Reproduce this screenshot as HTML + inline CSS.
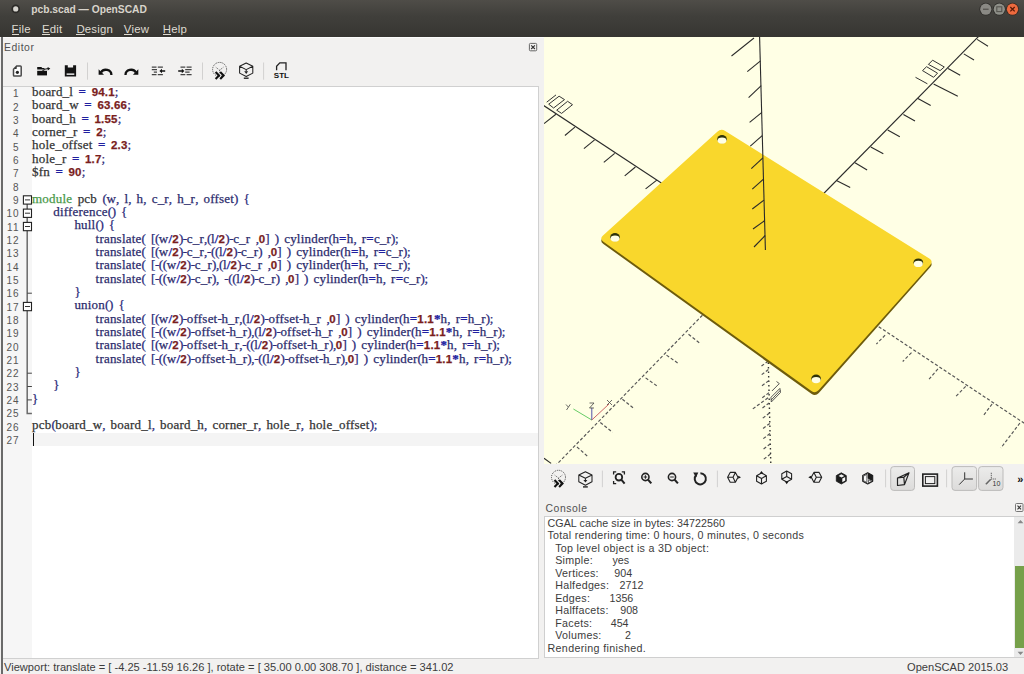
<!DOCTYPE html>
<html><head><meta charset="utf-8"><title>pcb.scad - OpenSCAD</title>
<style>
*{margin:0;padding:0;box-sizing:border-box}
html,body{width:1024px;height:674px;overflow:hidden;background:#f2f1f0;font-family:"Liberation Sans",sans-serif;position:relative}
.a{position:absolute}
#title{left:0;top:0;width:1024px;height:37px;background:linear-gradient(#4f4d48,#403f3b 16px,#3c3b37 26px,#363531)}
.tt{position:absolute;left:31.3px;top:4.1px;font-size:10.25px;font-weight:bold;color:#d8d4cb;white-space:nowrap}
.mi{position:absolute;top:22.8px;font-size:11.4px;letter-spacing:0.2px;color:#dfdbd2;white-space:nowrap}
.mi u{text-decoration:none;position:relative}
.mi u:after{content:"";position:absolute;left:0;right:0;bottom:-0.3px;height:1px;background:#dfdbd2}
.lbl{position:absolute;font-size:10.4px;letter-spacing:0.55px;color:#505050;white-space:nowrap}
#code{left:3px;top:86px;width:536px;height:573px;background:#fff;border-top:1px solid #d0d0d0;border-right:1px solid #d0d0d0;border-bottom:1px solid #d0d0d0}
#gutter{left:3px;top:87px;width:29px;height:571px;background:#f6f6f6}
#curline{left:32px;top:432.5px;width:506px;height:13.3px;background:#f4f4f4}
.ln{position:absolute;left:3px;width:16.5px;margin-top:2.3px;letter-spacing:1px;text-align:right;font-size:10px;color:#555;height:13.33px;line-height:13.33px}
.cl{position:absolute;left:32px;white-space:pre;font-family:"Liberation Serif",serif;font-size:13px;letter-spacing:0.2px;word-spacing:2px;color:#333;height:13.33px;line-height:13.33px;-webkit-text-stroke:0.25px currentColor}
.k{color:#4a9a4a}.n{color:#2b2b6c}.p{color:#2a2a7a;letter-spacing:-0.35px}
.o{color:#2020a0;font-weight:bold}
.d{color:#7a1e1e;font-weight:bold;font-family:"Liberation Sans",sans-serif;font-size:11.5px}
#view{left:544px;top:37px;width:480px;height:427px;background:#ffffe5;overflow:hidden}
#console{left:544px;top:516px;width:471px;height:142px;background:#fff;border:1px solid #cfcfcf}
.cs{position:absolute;font-size:10.7px;line-height:12.5px;color:#3c3c3c;white-space:pre}
.st{position:absolute;top:661px;font-size:11.1px;color:#3c3c3c;white-space:pre}

.ind{word-spacing:1.85px}

</style></head><body>
<div id="title" class="a">
  <div class="tt">pcb.scad — OpenSCAD</div>
  <div class="mi" style="left:11.5px"><u>F</u>ile</div>
  <div class="mi" style="left:42px"><u>E</u>dit</div>
  <div class="mi" style="left:76.4px"><u>D</u>esign</div>
  <div class="mi" style="left:123.8px"><u>V</u>iew</div>
  <div class="mi" style="left:162.7px"><u>H</u>elp</div>
</div>
<div class="a" style="left:0;top:37px;width:1024px;height:1px;background:#fbfbfb"></div>
<div class="a" style="left:1px;top:37px;width:1.5px;height:637px;background:#6a6a6a"></div>
<div class="lbl" style="left:4px;top:42px">Editor</div>
<svg width="1024" height="674" viewBox="0 0 1024 674" style="position:absolute;left:0;top:0;z-index:5;pointer-events:none">
<defs>
<linearGradient id="btn" x1="0" y1="0" x2="0" y2="1"><stop offset="0" stop-color="#ececeb"/><stop offset="1" stop-color="#dcdbda"/></linearGradient>
<g id="hex"><path d="M0 -5.6 L5 -2.9 L5 2.9 L0 5.6 L-5 2.9 L-5 -2.9 Z M-5 -2.9 L0 -0.2 L5 -2.9 M0 -0.2 L0 5.6" fill="none" stroke="#2a2a2a" stroke-width="1.1" stroke-linejoin="round"/></g>
<g id="prev"><circle cx="0" cy="0" r="7" fill="none" stroke="#3a3a3a" stroke-width="1" stroke-dasharray="1 1.1"/><path d="M0 0.8 L-3.8 -2.2 M0 0.8 L3.8 -2.2 M0 0.8 L0 4" stroke="#555" stroke-width="0.9" stroke-dasharray="1 1" fill="none"/><path d="M-4 2.6 L-0.6 6.1 L-4 9.6 M0.6 2.6 L4 6.1 L0.6 9.6" stroke="#111" stroke-width="2.1" fill="none" stroke-linejoin="miter"/></g>
<g id="rend"><path d="M0 -6.6 L6.6 -3.3 L6.6 3.5 L0 6.9 L-6.6 3.5 L-6.6 -3.3 Z M-6.6 -3.3 L0 0 L6.6 -3.3 M0 0 L0 2" fill="none" stroke="#222" stroke-width="1.05" stroke-linejoin="round"/><path d="M-2 1.6 L2 1.6 L0 4.3 Z" fill="#222"/><rect x="-2.4" y="7.9" width="4.8" height="1.4" fill="#222"/></g>
</defs>
<!-- window buttons -->
<circle cx="985.8" cy="9.2" r="6.4" fill="#2e2d2a"/><circle cx="985.8" cy="9.2" r="5.6" fill="#8a8984"/><rect x="983" y="8.6" width="5.6" height="1.3" fill="#55544f"/>
<circle cx="999.3" cy="9.2" r="6.4" fill="#2e2d2a"/><circle cx="999.3" cy="9.2" r="5.6" fill="#8e8f88"/><rect x="996.8" y="6.8" width="5" height="4.8" fill="none" stroke="#55544f" stroke-width="1.1"/>
<circle cx="1012.5" cy="9.2" r="6.4" fill="#3a2a22"/><circle cx="1012.5" cy="9.2" r="5.6" fill="#ee6a3e"/><path d="M1010.3 7 L1014.7 11.4 M1014.7 7 L1010.3 11.4" stroke="#5a1a08" stroke-width="1.3"/>
<!-- app icon -->
<circle cx="15.7" cy="8.9" r="4.3" fill="#2c2b28"/><circle cx="15.7" cy="8.9" r="2.6" fill="#d8d6d0"/>
<!-- editor dock close -->
<rect x="529.4" y="43.4" width="7.3" height="7.4" rx="1" fill="none" stroke="#666" stroke-width="1"/><path d="M531.2 45.3 L534.9 49 M534.9 45.3 L531.2 49" stroke="#333" stroke-width="1.1"/>
<path d="M1017.6 523.2 L1020.5 520 L1023.4 523.2 Z M1017.6 651.8 L1020.5 655 L1023.4 651.8 Z" fill="#888"/>
<!-- console dock close -->
<rect x="1015.5" y="503.5" width="7.5" height="8" rx="1" fill="none" stroke="#777" stroke-width="1"/><path d="M1017.5 505.7 L1021 509.3 M1021 505.7 L1017.5 509.3" stroke="#333" stroke-width="1.1"/>
<!-- fold markers -->
<path d="M27.2 204 V413.6 H31.9" fill="none" stroke="#6a6a6a" stroke-width="1.5"/>
<path d="M27.2 293.2 H31.9" stroke="#444" stroke-width="1"/>
<path d="M27.2 373.2 H31.9" stroke="#444" stroke-width="1"/>
<path d="M27.2 386.5 H31.9" stroke="#444" stroke-width="1"/>
<path d="M27.2 399.9 H31.9" stroke="#444" stroke-width="1"/>
<rect x="23.4" y="195.8" width="8.1" height="8.3" fill="#fff" stroke="#222" stroke-width="1.1"/><path d="M25 199.9 H30" stroke="#333" stroke-width="1"/>
<rect x="23.4" y="209.1" width="8.1" height="8.3" fill="#fff" stroke="#222" stroke-width="1.1"/><path d="M25 213.2 H30" stroke="#333" stroke-width="1"/>
<rect x="23.4" y="222.4" width="8.1" height="8.3" fill="#fff" stroke="#222" stroke-width="1.1"/><path d="M25 226.5 H30" stroke="#333" stroke-width="1"/>
<rect x="23.4" y="302.4" width="8.1" height="8.3" fill="#fff" stroke="#222" stroke-width="1.1"/><path d="M25 306.5 H30" stroke="#333" stroke-width="1"/>
<!-- editor toolbar -->
<path d="M13.5 69.3 L16.9 65.9 H20.3 Q21.2 65.9 21.2 66.8 V75.2 Q21.2 76.1 20.3 76.1 H14.4 Q13.5 76.1 13.5 75.2 Z" fill="#fdfdfd" stroke="#4a4a4a" stroke-width="1.5" stroke-linejoin="round"/>
<path d="M14.2 68.9 L16.6 66.5 L16.6 68.9 Z" fill="#333"/>
<circle cx="17.4" cy="72.3" r="1.6" fill="#222"/>
<path d="M37.2 67 H41.3 L42.3 68 H44.5 V69.6 H37.2 Z" fill="#111"/>
<rect x="37.2" y="70.8" width="9.8" height="4.6" fill="#111"/>
<path d="M42.5 71 Q45 68.2 48.3 68.6" stroke="#333" stroke-width="1.2" fill="none"/><path d="M47.6 66.9 L50.3 68.6 L47.8 70.4 Z" fill="#111"/>
<path d="M64.8 65.3 H67.8 V67.6 H73.1 V65.3 H76.1 V76.4 H64.8 Z" fill="#141414"/>
<rect x="66.6" y="73.4" width="7.7" height="1.5" fill="#e8e8e8"/>
<line x1="87.5" y1="62.5" x2="87.5" y2="79.7" stroke="#d2d1d0" stroke-width="1"/>
<path d="M101 72.3 A5.6 5.2 0 0 1 111.4 74.9" fill="none" stroke="#111" stroke-width="2.3"/>
<path d="M98.6 69.3 L98.6 74.7 L104 74.7 Z" fill="#111"/>
<path d="M135.9 72.3 A5.6 5.2 0 0 0 125.5 74.9" fill="none" stroke="#111" stroke-width="2.3"/>
<path d="M138.3 69.3 L138.3 74.7 L132.9 74.7 Z" fill="#111"/>
<g stroke="#444" stroke-width="1.2">
<path d="M151.8 67.1 H156.5 M157.8 67.1 H162.9 M151.8 69.6 H157 M153.8 72.1 H157 M151.8 74.6 H156.5 M157.8 74.6 H162.9"/>
<path d="M180.5 67.1 H185.3 M186.6 67.1 H191.6 M185.2 69.6 H191.6 M185.2 72.1 H189.6 M180.5 74.6 H185.3 M186.6 74.6 H191.6"/>
</g>
<path d="M159.4 71 L162 68.8 V70.3 H165.2 V71.7 H162 V73.2 Z" fill="#111"/>
<path d="M184.4 71 L181.8 68.8 V70.3 H178.2 V71.7 H181.8 V73.2 Z" fill="#111"/>
<line x1="202.5" y1="62.5" x2="202.5" y2="79.7" stroke="#d2d1d0" stroke-width="1"/>
<use href="#prev" x="219.6" y="69.4"/>
<use href="#rend" x="246.2" y="69.6"/>
<line x1="263.6" y1="62.5" x2="263.6" y2="79.7" stroke="#d2d1d0" stroke-width="1"/>
<path d="M276.6 70.3 V66.2 L279.8 62.9 H286 V70.3" fill="none" stroke="#222" stroke-width="1.3" stroke-linejoin="miter"/>
<text x="273.8" y="77.9" font-family="Liberation Sans" font-weight="bold" font-size="7" fill="#111" textLength="15.2" lengthAdjust="spacingAndGlyphs">STL</text>
<!-- view toolbar -->
<use href="#prev" x="558.5" y="477.3"/>
<use href="#rend" x="585.4" y="478.3"/>
<line x1="602.4" y1="470.6" x2="602.4" y2="487.2" stroke="#d2d1d0" stroke-width="1"/>
<g fill="none" stroke="#222" stroke-width="1.3">
<path d="M613.6 474.5 V471.9 H616.2 M621.8 471.9 H624.4 V474.5 M613.6 481 V483.6 H616.2"/>
<circle cx="618.9" cy="477.2" r="3.3" stroke-width="1.8"/>
<path d="M621.3 479.6 L624.6 483.6" stroke-width="2"/>
<circle cx="645.4" cy="477" r="3.6" stroke-width="1.6"/><path d="M648 479.6 L651.3 483.4" stroke-width="2.1"/><path d="M643.6 477 H647.2 M645.4 475.2 V478.8" stroke-width="1"/>
<circle cx="672" cy="477" r="3.6" stroke-width="1.6"/><path d="M674.6 479.6 L677.9 483.4" stroke-width="2.1"/><path d="M670.2 477 H673.8" stroke-width="1"/>
<path d="M696.2 475 A5.6 5.6 0 1 0 700.4 473.2" stroke-width="2"/>
</g>
<path d="M693.2 472.6 L698.3 472.6 L696 477.5 Z" fill="#222"/>
<line x1="717.4" y1="470.6" x2="717.4" y2="487.2" stroke="#d2d1d0" stroke-width="1"/>
<g fill="none" stroke="#222" stroke-width="1.1" stroke-linejoin="round">
<path d="M727.6 477.3 L730.2 472.4 L735.4 472.4 L738 477.3 L735.4 482.2 L730.2 482.2 Z M727.6 477.3 H733 L735.4 472.4 M733 477.3 L735.4 482.2"/>
<path d="M761.5 472.9 L766.4 475.7 L766.4 481.2 L761.5 484 L756.6 481.2 L756.6 475.7 Z M756.6 475.7 L761.5 478.5 L766.4 475.7 M761.5 478.5 V484"/>
<path d="M786.7 471 L791.6 473.8 L791.6 479.3 L786.7 482.1 L781.8 479.3 L781.8 473.8 Z M786.7 471 V476.5 L781.8 479.3 M786.7 476.5 L791.6 479.3"/>
<path d="M811.3 477.3 L813.9 472.4 L819.1 472.4 L821.7 477.3 L819.1 482.2 L813.9 482.2 Z M821.7 477.3 H816.3 L813.9 472.4 M816.3 477.3 L813.9 482.2"/>
</g>
<path d="M738.2 475.8 L741 477.3 L738.2 478.8 Z" fill="#111"/>
<path d="M759.7 473.6 L761.5 470.9 L763.3 473.6 Z" fill="#111"/>
<path d="M784.9 481.6 L786.7 484.3 L788.5 481.6 Z" fill="#111"/>
<path d="M811.1 475.8 L808.3 477.3 L811.1 478.8 Z" fill="#111"/>
<path d="M841.3 472.8 L846.3 475.6 L846.3 481.2 L841.3 484 L836.3 481.2 L836.3 475.6 Z" fill="#1c1c1c" stroke="#1c1c1c" stroke-width="0.8" stroke-linejoin="round"/>
<path d="M841.3 474.3 L844.3 475.9 L841.6 477.5 L838.6 475.9 Z" fill="#f2f2f2"/>
<path d="M842.3 478.6 L845.2 477 L845.2 480.6 L842.3 482.3 Z" fill="#f8f8f8"/>
<path d="M867.7 472.8 L872.7 475.6 L872.7 481.2 L867.7 484 L862.7 481.2 L862.7 475.6 Z" fill="#fafafa" stroke="#1c1c1c" stroke-width="1.1" stroke-linejoin="round"/>
<path d="M867.7 472.8 L872.7 475.6 L872.7 481.2 L867.7 478.4 Z" fill="#1c1c1c"/>
<path d="M863.5 476.2 L866.9 474.3 L866.9 478.6 M863.5 476.2 V480.6 L866.9 482.6 V478.6 M868.6 479.6 L871.8 481.4 L868.6 483.2 Z" fill="none" stroke="#333" stroke-width="0.8"/>
<line x1="885.6" y1="469.5" x2="885.6" y2="487.3" stroke="#d2d1d0" stroke-width="1"/>
<rect x="890.7" y="466.6" width="23.8" height="23.8" rx="3" fill="url(#btn)" stroke="#bcbbba" stroke-width="1"/>
<g fill="none" stroke="#222" stroke-width="1.2" stroke-linejoin="round">
<path d="M897.5 478 L909 472.8 L904.5 484.6 L897.5 485.5 Z M897.5 478 L903.8 477.2 L904.5 484.6 M903.8 477.2 L909 472.8"/>
</g>
<g fill="none" stroke="#222">
<rect x="922.8" y="474.1" width="14.6" height="12" stroke-width="1.6"/><rect x="925.4" y="476.6" width="9.4" height="7" stroke-width="1"/>
</g>
<line x1="946.6" y1="469.5" x2="946.6" y2="487.3" stroke="#d2d1d0" stroke-width="1"/>
<rect x="952" y="466.6" width="24.6" height="23.8" rx="3" fill="url(#btn)" stroke="#bcbbba" stroke-width="1"/>
<rect x="978.6" y="466.6" width="24.4" height="23.8" rx="3" fill="url(#btn)" stroke="#bcbbba" stroke-width="1"/>
<path d="M964.7 472.3 V479 H972.9 M964.7 479 L959.2 484.6" fill="none" stroke="#333" stroke-width="1"/>
<path d="M991.3 472.8 V479 M991.3 479 H996 M991.3 479 L986 484.4" fill="none" stroke="#444" stroke-width="1" stroke-dasharray="1 1"/>
<path d="M990.5 479.5 L985.8 484.3" stroke="#666" stroke-width="1.4"/>
<text x="992.5" y="485.6" font-family="Liberation Sans" font-size="7" fill="#333">10</text>
<text x="1017.3" y="482.8" font-family="Liberation Sans" font-weight="bold" font-size="11" fill="#111">»</text>
</svg>

<div id="code" class="a"></div>
<div id="gutter" class="a"></div>
<div id="curline" class="a"></div>
<div class="ln" style="top:85.00px">1</div>
<div class="cl" style="top:85.00px">board_l <span class="o">=</span> <span class="d">94.1</span><span class="p">;</span></div>
<div class="ln" style="top:98.33px">2</div>
<div class="cl" style="top:98.33px">board_w <span class="o">=</span> <span class="d">63.66</span><span class="p">;</span></div>
<div class="ln" style="top:111.67px">3</div>
<div class="cl" style="top:111.67px">board_h <span class="o">=</span> <span class="d">1.55</span><span class="p">;</span></div>
<div class="ln" style="top:125.00px">4</div>
<div class="cl" style="top:125.00px">corner_r <span class="o">=</span> <span class="d">2</span><span class="p">;</span></div>
<div class="ln" style="top:138.33px">5</div>
<div class="cl" style="top:138.33px">hole_offset <span class="o">=</span> <span class="d">2.3</span><span class="p">;</span></div>
<div class="ln" style="top:151.67px">6</div>
<div class="cl" style="top:151.67px">hole_r <span class="o">=</span> <span class="d">1.7</span><span class="p">;</span></div>
<div class="ln" style="top:165.00px">7</div>
<div class="cl" style="top:165.00px">$fn <span class="o">=</span> <span class="d">90</span><span class="p">;</span></div>
<div class="ln" style="top:178.33px">8</div>
<div class="cl" style="top:178.33px"></div>
<div class="ln" style="top:191.66px">9</div>
<div class="cl" style="top:191.66px"><span class="k">module</span> pcb <span class="p">(</span><span class="n">w</span><span class="p">,</span> <span class="n">l</span><span class="p">,</span> <span class="n">h</span><span class="p">,</span> <span class="n">c_r</span><span class="p">,</span> <span class="n">h_r</span><span class="p">,</span> <span class="n">offset</span><span class="p">)</span> <span class="p">{</span></div>
<div class="ln" style="top:205.00px">10</div>
<div class="cl" style="top:205.00px"><span class="ind">    </span><span class="n">difference</span><span class="p">(</span><span class="p">)</span> <span class="p">{</span></div>
<div class="ln" style="top:218.33px">11</div>
<div class="cl" style="top:218.33px"><span class="ind">        </span><span class="n">hull</span><span class="p">(</span><span class="p">)</span> <span class="p">{</span></div>
<div class="ln" style="top:231.66px">12</div>
<div class="cl" style="top:231.66px"><span class="ind">            </span><span class="n">translate</span><span class="p">(</span> <span class="p">[</span><span class="p">(</span><span class="n">w</span><span class="o">/</span><span class="d">2</span><span class="p">)</span><span class="p">-</span><span class="n">c_r</span><span class="p">,</span><span class="p">(</span><span class="n">l</span><span class="o">/</span><span class="d">2</span><span class="p">)</span><span class="p">-</span><span class="n">c_r</span> <span class="p">,</span><span class="d">0</span><span class="p">]</span> <span class="p">)</span> <span class="n">cylinder</span><span class="p">(</span><span class="n">h</span><span class="o">=</span><span class="n">h</span><span class="p">,</span> <span class="n">r</span><span class="o">=</span><span class="n">c_r</span><span class="p">)</span><span class="p">;</span></div>
<div class="ln" style="top:245.00px">13</div>
<div class="cl" style="top:245.00px"><span class="ind">            </span><span class="n">translate</span><span class="p">(</span> <span class="p">[</span><span class="p">(</span><span class="n">w</span><span class="o">/</span><span class="d">2</span><span class="p">)</span><span class="p">-</span><span class="n">c_r</span><span class="p">,</span><span class="p">-</span><span class="p">(</span><span class="p">(</span><span class="n">l</span><span class="o">/</span><span class="d">2</span><span class="p">)</span><span class="p">-</span><span class="n">c_r</span><span class="p">)</span> <span class="p">,</span><span class="d">0</span><span class="p">]</span> <span class="p">)</span> <span class="n">cylinder</span><span class="p">(</span><span class="n">h</span><span class="o">=</span><span class="n">h</span><span class="p">,</span> <span class="n">r</span><span class="o">=</span><span class="n">c_r</span><span class="p">)</span><span class="p">;</span></div>
<div class="ln" style="top:258.33px">14</div>
<div class="cl" style="top:258.33px"><span class="ind">            </span><span class="n">translate</span><span class="p">(</span> <span class="p">[</span><span class="p">-</span><span class="p">(</span><span class="p">(</span><span class="n">w</span><span class="o">/</span><span class="d">2</span><span class="p">)</span><span class="p">-</span><span class="n">c_r</span><span class="p">)</span><span class="p">,</span><span class="p">(</span><span class="n">l</span><span class="o">/</span><span class="d">2</span><span class="p">)</span><span class="p">-</span><span class="n">c_r</span> <span class="p">,</span><span class="d">0</span><span class="p">]</span> <span class="p">)</span> <span class="n">cylinder</span><span class="p">(</span><span class="n">h</span><span class="o">=</span><span class="n">h</span><span class="p">,</span> <span class="n">r</span><span class="o">=</span><span class="n">c_r</span><span class="p">)</span><span class="p">;</span></div>
<div class="ln" style="top:271.66px">15</div>
<div class="cl" style="top:271.66px"><span class="ind">            </span><span class="n">translate</span><span class="p">(</span> <span class="p">[</span><span class="p">-</span><span class="p">(</span><span class="p">(</span><span class="n">w</span><span class="o">/</span><span class="d">2</span><span class="p">)</span><span class="p">-</span><span class="n">c_r</span><span class="p">)</span><span class="p">,</span> <span class="p">-</span><span class="p">(</span><span class="p">(</span><span class="n">l</span><span class="o">/</span><span class="d">2</span><span class="p">)</span><span class="p">-</span><span class="n">c_r</span><span class="p">)</span> <span class="p">,</span><span class="d">0</span><span class="p">]</span> <span class="p">)</span> <span class="n">cylinder</span><span class="p">(</span><span class="n">h</span><span class="o">=</span><span class="n">h</span><span class="p">,</span> <span class="n">r</span><span class="o">=</span><span class="n">c_r</span><span class="p">)</span><span class="p">;</span></div>
<div class="ln" style="top:285.00px">16</div>
<div class="cl" style="top:285.00px"><span class="ind">        </span><span class="p">}</span></div>
<div class="ln" style="top:298.33px">17</div>
<div class="cl" style="top:298.33px"><span class="ind">        </span><span class="n">union</span><span class="p">(</span><span class="p">)</span> <span class="p">{</span></div>
<div class="ln" style="top:311.66px">18</div>
<div class="cl" style="top:311.66px"><span class="ind">            </span><span class="n">translate</span><span class="p">(</span> <span class="p">[</span><span class="p">(</span><span class="n">w</span><span class="o">/</span><span class="d">2</span><span class="p">)</span><span class="p">-</span><span class="n">offset</span><span class="p">-</span><span class="n">h_r</span><span class="p">,</span><span class="p">(</span><span class="n">l</span><span class="o">/</span><span class="d">2</span><span class="p">)</span><span class="p">-</span><span class="n">offset</span><span class="p">-</span><span class="n">h_r</span> <span class="p">,</span><span class="d">0</span><span class="p">]</span> <span class="p">)</span> <span class="n">cylinder</span><span class="p">(</span><span class="n">h</span><span class="o">=</span><span class="d">1.1</span><span class="o">*</span><span class="n">h</span><span class="p">,</span> <span class="n">r</span><span class="o">=</span><span class="n">h_r</span><span class="p">)</span><span class="p">;</span></div>
<div class="ln" style="top:324.99px">19</div>
<div class="cl" style="top:324.99px"><span class="ind">            </span><span class="n">translate</span><span class="p">(</span> <span class="p">[</span><span class="p">-</span><span class="p">(</span><span class="p">(</span><span class="n">w</span><span class="o">/</span><span class="d">2</span><span class="p">)</span><span class="p">-</span><span class="n">offset</span><span class="p">-</span><span class="n">h_r</span><span class="p">)</span><span class="p">,</span><span class="p">(</span><span class="n">l</span><span class="o">/</span><span class="d">2</span><span class="p">)</span><span class="p">-</span><span class="n">offset</span><span class="p">-</span><span class="n">h_r</span> <span class="p">,</span><span class="d">0</span><span class="p">]</span> <span class="p">)</span> <span class="n">cylinder</span><span class="p">(</span><span class="n">h</span><span class="o">=</span><span class="d">1.1</span><span class="o">*</span><span class="n">h</span><span class="p">,</span> <span class="n">r</span><span class="o">=</span><span class="n">h_r</span><span class="p">)</span><span class="p">;</span></div>
<div class="ln" style="top:338.33px">20</div>
<div class="cl" style="top:338.33px"><span class="ind">            </span><span class="n">translate</span><span class="p">(</span> <span class="p">[</span><span class="p">(</span><span class="n">w</span><span class="o">/</span><span class="d">2</span><span class="p">)</span><span class="p">-</span><span class="n">offset</span><span class="p">-</span><span class="n">h_r</span><span class="p">,</span><span class="p">-</span><span class="p">(</span><span class="p">(</span><span class="n">l</span><span class="o">/</span><span class="d">2</span><span class="p">)</span><span class="p">-</span><span class="n">offset</span><span class="p">-</span><span class="n">h_r</span><span class="p">)</span><span class="p">,</span><span class="d">0</span><span class="p">]</span> <span class="p">)</span> <span class="n">cylinder</span><span class="p">(</span><span class="n">h</span><span class="o">=</span><span class="d">1.1</span><span class="o">*</span><span class="n">h</span><span class="p">,</span> <span class="n">r</span><span class="o">=</span><span class="n">h_r</span><span class="p">)</span><span class="p">;</span></div>
<div class="ln" style="top:351.66px">21</div>
<div class="cl" style="top:351.66px"><span class="ind">            </span><span class="n">translate</span><span class="p">(</span> <span class="p">[</span><span class="p">-</span><span class="p">(</span><span class="p">(</span><span class="n">w</span><span class="o">/</span><span class="d">2</span><span class="p">)</span><span class="p">-</span><span class="n">offset</span><span class="p">-</span><span class="n">h_r</span><span class="p">)</span><span class="p">,</span><span class="p">-</span><span class="p">(</span><span class="p">(</span><span class="n">l</span><span class="o">/</span><span class="d">2</span><span class="p">)</span><span class="p">-</span><span class="n">offset</span><span class="p">-</span><span class="n">h_r</span><span class="p">)</span><span class="p">,</span><span class="d">0</span><span class="p">]</span> <span class="p">)</span> <span class="n">cylinder</span><span class="p">(</span><span class="n">h</span><span class="o">=</span><span class="d">1.1</span><span class="o">*</span><span class="n">h</span><span class="p">,</span> <span class="n">r</span><span class="o">=</span><span class="n">h_r</span><span class="p">)</span><span class="p">;</span></div>
<div class="ln" style="top:364.99px">22</div>
<div class="cl" style="top:364.99px"><span class="ind">        </span><span class="p">}</span></div>
<div class="ln" style="top:378.33px">23</div>
<div class="cl" style="top:378.33px"><span class="ind">    </span><span class="p">}</span></div>
<div class="ln" style="top:391.66px">24</div>
<div class="cl" style="top:391.66px"><span class="p">}</span></div>
<div class="ln" style="top:404.99px">25</div>
<div class="cl" style="top:404.99px"></div>
<div class="ln" style="top:418.32px">26</div>
<div class="cl" style="top:418.32px">pcb<span class="p">(</span>board_w<span class="p">,</span> board_l<span class="p">,</span> board_h<span class="p">,</span> corner_r<span class="p">,</span> hole_r<span class="p">,</span> hole_offset<span class="p">)</span><span class="p">;</span></div>
<div class="ln" style="top:431.66px">27</div>
<div class="cl" style="top:431.66px"></div>
<div class="a" style="left:32.6px;top:432.6px;width:1.6px;height:13px;background:#111"></div>
<div id="view" class="a"><svg width="480" height="427" viewBox="544 37 480 427" style="position:absolute;left:0;top:0"><line x1="766.0" y1="252.0" x2="530.0" y2="96.5" stroke="#2a2a2a" stroke-width="1.1"/><line x1="555.9" y1="114.2" x2="544.0" y2="123.6" stroke="#2a2a2a" stroke-width="1.1"/><line x1="574.9" y1="127.2" x2="564.9" y2="135.5" stroke="#2a2a2a" stroke-width="1.1"/><line x1="594.6" y1="139.8" x2="583.9" y2="148.6" stroke="#2a2a2a" stroke-width="1.1"/><line x1="614.7" y1="153.3" x2="603.8" y2="162.3" stroke="#2a2a2a" stroke-width="1.1"/><line x1="635.4" y1="167.0" x2="624.7" y2="175.9" stroke="#2a2a2a" stroke-width="1.1"/><line x1="656.8" y1="180.1" x2="645.6" y2="188.9" stroke="#2a2a2a" stroke-width="1.1"/><path d="M546.7 102.2 L556 94.9 M548.7 104.2 L559.1 96.2 L564.5 99.6 L553.6 108 Z M556.7 110.2 L567.6 101.3 L572.5 104.7 L561.6 113.4 Z" fill="none" stroke="#333" stroke-width="1" stroke-linejoin="round"/><line x1="766.0" y1="252.0" x2="980.0" y2="35.0" stroke="#2a2a2a" stroke-width="1.1"/><line x1="836.9" y1="180.8" x2="850.2" y2="187.4" stroke="#2a2a2a" stroke-width="1.1"/><line x1="855.0" y1="162.7" x2="867.1" y2="170.0" stroke="#2a2a2a" stroke-width="1.1"/><line x1="870.8" y1="147.0" x2="883.3" y2="153.8" stroke="#2a2a2a" stroke-width="1.1"/><line x1="887.7" y1="130.0" x2="899.8" y2="136.8" stroke="#2a2a2a" stroke-width="1.1"/><line x1="903.4" y1="114.4" x2="915.0" y2="121.1" stroke="#2a2a2a" stroke-width="1.1"/><line x1="917.9" y1="98.6" x2="930.7" y2="105.4" stroke="#2a2a2a" stroke-width="1.1"/><line x1="933.6" y1="84.1" x2="957.8" y2="96.2" stroke="#2a2a2a" stroke-width="1.1"/><line x1="948.1" y1="68.4" x2="960.2" y2="75.2" stroke="#2a2a2a" stroke-width="1.1"/><line x1="963.8" y1="53.9" x2="974.0" y2="60.0" stroke="#2a2a2a" stroke-width="1.1"/><line x1="977.1" y1="39.4" x2="988.0" y2="46.2" stroke="#2a2a2a" stroke-width="1.1"/><path d="M915.5 77.3 L927.4 83.8 M922.5 70.6 L926.6 66.7 L937.5 73.2 L933.6 77.3 Z M928.4 64.4 L932.6 60.2 L944.3 67 L940.1 70.6 Z" fill="none" stroke="#333" stroke-width="1" stroke-linejoin="round"/><line x1="764.2" y1="252.0" x2="543.4" y2="478.0" stroke="#555" stroke-width="1.15" stroke-dasharray="3.2 2"/><line x1="688.5" y1="334.3" x2="699.5" y2="342.9" stroke="#555" stroke-width="1.15" stroke-dasharray="3.2 2"/><line x1="666.5" y1="355.1" x2="678.7" y2="363.7" stroke="#555" stroke-width="1.15" stroke-dasharray="3.2 2"/><line x1="645.6" y1="377.9" x2="656.7" y2="385.7" stroke="#555" stroke-width="1.15" stroke-dasharray="3.2 2"/><line x1="622.4" y1="399.2" x2="634.6" y2="409.0" stroke="#555" stroke-width="1.15" stroke-dasharray="3.2 2"/><line x1="600.3" y1="422.5" x2="612.6" y2="432.3" stroke="#555" stroke-width="1.15" stroke-dasharray="3.2 2"/><line x1="577.0" y1="447.0" x2="588.0" y2="456.7" stroke="#555" stroke-width="1.15" stroke-dasharray="3.2 2"/><line x1="544.0" y1="458.2" x2="551.1" y2="463.4" stroke="#2a2a2a" stroke-width="1.1"/><line x1="766.0" y1="252.0" x2="1030.0" y2="427.0" stroke="#555" stroke-width="1.15" stroke-dasharray="3.2 2"/><line x1="885.1" y1="335.2" x2="876.4" y2="344.0" stroke="#555" stroke-width="1.15" stroke-dasharray="3.2 2"/><line x1="911.5" y1="352.7" x2="902.7" y2="361.5" stroke="#555" stroke-width="1.15" stroke-dasharray="3.2 2"/><line x1="937.9" y1="368.9" x2="929.1" y2="379.1" stroke="#555" stroke-width="1.15" stroke-dasharray="3.2 2"/><line x1="965.7" y1="386.4" x2="955.5" y2="396.7" stroke="#555" stroke-width="1.15" stroke-dasharray="3.2 2"/><line x1="992.1" y1="404.0" x2="983.3" y2="415.7" stroke="#555" stroke-width="1.15" stroke-dasharray="3.2 2"/><line x1="1019.9" y1="423.0" x2="1000.9" y2="448.0" stroke="#555" stroke-width="1.15" stroke-dasharray="3.2 2"/><line x1="768.2" y1="358" x2="770.8" y2="464" stroke="#333" stroke-width="1.4" stroke-dasharray="1.5 3"/><line x1="768.2" y1="361.0" x2="760.2" y2="367.0" stroke="#555" stroke-width="1.2" stroke-dasharray="3.2 2"/><line x1="768.4" y1="369.6" x2="760.4" y2="375.6" stroke="#555" stroke-width="1.2" stroke-dasharray="3.2 2"/><line x1="768.7" y1="380.7" x2="760.7" y2="386.7" stroke="#555" stroke-width="1.2" stroke-dasharray="3.2 2"/><line x1="769.0" y1="392.7" x2="761.0" y2="398.7" stroke="#555" stroke-width="1.2" stroke-dasharray="3.2 2"/><line x1="769.2" y1="402.9" x2="761.2" y2="408.9" stroke="#555" stroke-width="1.2" stroke-dasharray="3.2 2"/><line x1="769.5" y1="413.1" x2="761.5" y2="419.1" stroke="#555" stroke-width="1.2" stroke-dasharray="3.2 2"/><line x1="769.8" y1="423.4" x2="761.8" y2="429.4" stroke="#555" stroke-width="1.2" stroke-dasharray="3.2 2"/><line x1="770.0" y1="433.6" x2="762.0" y2="439.6" stroke="#555" stroke-width="1.2" stroke-dasharray="3.2 2"/><line x1="770.3" y1="443.9" x2="762.3" y2="449.9" stroke="#555" stroke-width="1.2" stroke-dasharray="3.2 2"/><line x1="770.5" y1="454.1" x2="762.5" y2="460.1" stroke="#555" stroke-width="1.2" stroke-dasharray="3.2 2"/><line x1="768.0" y1="397.8" x2="752.8" y2="408.9" stroke="#555" stroke-width="1.2" stroke-dasharray="3.2 2"/><path d="M771.9 391 L779.3 383.6 L776.5 381.5 M771 397.3 L779.9 388.4 L780.5 392.5 L771.3 402 Z M771.2 400 L780.2 390.5" fill="none" stroke="#444" stroke-width="0.9" stroke-linejoin="round"/><path d="M717.3 134.0 Q721.0 130.6 725.2 133.3 L929.3 260.8 Q933.5 263.5 930.2 267.2 L818.8 392.9 Q815.5 396.6 811.4 393.7 L603.4 244.0 Q599.3 241.1 603.0 237.7 Z" fill="#6e5c0c"/><path d="M717.3 131.7 Q721.0 128.3 725.2 131.0 L929.3 258.5 Q933.5 261.2 930.2 264.9 L818.8 390.1 Q815.5 393.8 811.4 390.9 L603.4 241.7 Q599.3 238.8 603.0 235.4 Z" fill="#f9d72c"/><ellipse cx="722" cy="139.2" rx="4.8" ry="4.1" fill="#2e3208"/><ellipse cx="722" cy="140.6" rx="4.5" ry="3.1" fill="#ffffe5"/><ellipse cx="615" cy="237.2" rx="4.8" ry="4.1" fill="#2e3208"/><ellipse cx="615" cy="238.6" rx="4.5" ry="3.1" fill="#ffffe5"/><ellipse cx="918.3" cy="262.5" rx="4.8" ry="4.1" fill="#2e3208"/><ellipse cx="918.3" cy="263.90000000000003" rx="4.5" ry="3.1" fill="#ffffe5"/><ellipse cx="816.1" cy="378.7" rx="4.8" ry="4.1" fill="#2e3208"/><ellipse cx="816.1" cy="380.1" rx="4.5" ry="3.1" fill="#ffffe5"/><line x1="759.6" y1="37.0" x2="765.4" y2="250.0" stroke="#2a2a2a" stroke-width="1.1"/><line x1="754.0" y1="38.0" x2="731.5" y2="56.0" stroke="#2a2a2a" stroke-width="1.1"/><line x1="760.5" y1="60.8" x2="747.3" y2="71.7" stroke="#2a2a2a" stroke-width="1.1"/><line x1="761.2" y1="85.6" x2="748.6" y2="97.6" stroke="#2a2a2a" stroke-width="1.1"/><line x1="761.9" y1="112.4" x2="749.6" y2="122.4" stroke="#2a2a2a" stroke-width="1.1"/><line x1="762.2" y1="135.6" x2="750.3" y2="146.2" stroke="#2a2a2a" stroke-width="1.1"/><line x1="762.9" y1="157.8" x2="751.3" y2="168.7" stroke="#2a2a2a" stroke-width="1.1"/><line x1="763.2" y1="179.3" x2="752.3" y2="189.2" stroke="#2a2a2a" stroke-width="1.1"/><line x1="763.9" y1="200.1" x2="752.3" y2="209.0" stroke="#2a2a2a" stroke-width="1.1"/><line x1="764.5" y1="220.7" x2="753.0" y2="229.0" stroke="#2a2a2a" stroke-width="1.1"/><line x1="765.2" y1="235.5" x2="754.0" y2="247.0" stroke="#2a2a2a" stroke-width="1.1"/><line x1="591.8" y1="420" x2="573.4" y2="409" stroke="#6c6" stroke-width="1"/><line x1="591.8" y1="420" x2="591.8" y2="407.8" stroke="#55a" stroke-width="1"/><line x1="591.8" y1="420" x2="609" y2="404" stroke="#c66" stroke-width="1"/><path d="M566 404.5 L568.3 407 M570.3 404.3 L566.5 410 M589.5 403 L594 403 L589.5 408 L594 408 M607 400 L612 405 M612 400 L607 405" fill="none" stroke="#444" stroke-width="0.8"/></svg></div>
<div class="lbl" style="left:545.5px;top:503px">Console</div>
<div id="console" class="a"></div>
<div class="a" style="left:1014px;top:516px;width:10px;height:142px;background:#ebebeb;border-top:1px solid #cfcfcf;border-bottom:1px solid #cfcfcf"></div>
<div class="a" style="left:1015px;top:566px;width:9px;height:82px;background:#76a04a"></div>
<div class="cs" style="left:547.5px;top:516.8px;letter-spacing:0.06px">CGAL cache size in bytes: 34722560</div>
<div class="cs" style="left:547.5px;top:529.3px;letter-spacing:0.28px">Total rendering time: 0 hours, 0 minutes, 0 seconds</div>
<div class="cs" style="left:555.2px;top:541.8px;letter-spacing:0.3px">Top level object is a 3D object:</div>
<div class="cs" style="left:555.2px;top:554.3px;letter-spacing:0.3px">Simple:</div>
<div class="cs" style="left:612.5px;top:554.3px">yes</div>
<div class="cs" style="left:555.2px;top:566.8px;letter-spacing:0.3px">Vertices:</div>
<div class="cs" style="left:614.3px;top:566.8px">904</div>
<div class="cs" style="left:555.2px;top:579.3px;letter-spacing:0.3px">Halfedges:</div>
<div class="cs" style="left:619.6px;top:579.3px">2712</div>
<div class="cs" style="left:555.2px;top:591.8px;letter-spacing:0.3px">Edges:</div>
<div class="cs" style="left:609.5px;top:591.8px">1356</div>
<div class="cs" style="left:555.2px;top:604.3px;letter-spacing:0.3px">Halffacets:</div>
<div class="cs" style="left:620.2px;top:604.3px">908</div>
<div class="cs" style="left:555.2px;top:616.8px;letter-spacing:0.3px">Facets:</div>
<div class="cs" style="left:610.7px;top:616.8px">454</div>
<div class="cs" style="left:555.2px;top:629.3px;letter-spacing:0.3px">Volumes:</div>
<div class="cs" style="left:625px;top:629.3px">2</div>
<div class="cs" style="left:547.5px;top:641.8px;letter-spacing:0.34px">Rendering finished.</div>
<div class="st" style="left:4px">Viewport: translate = [ -4.25 -11.59 16.26 ], rotate = [ 35.00 0.00 308.70 ], distance = 341.02</div>
<div class="st" style="left:907px">OpenSCAD 2015.03</div>

</body></html>
